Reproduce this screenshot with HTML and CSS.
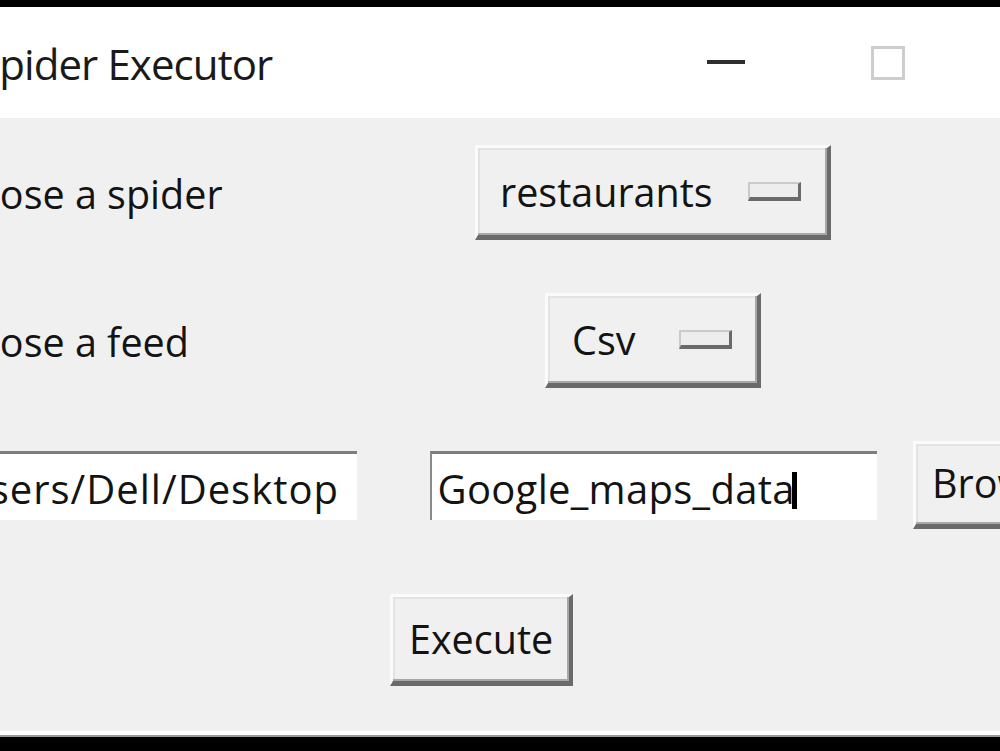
FILE: index.html
```html
<!DOCTYPE html>
<html>
<head>
<meta charset="utf-8">
<link rel="stylesheet" href="styles.css">
</head>
<body>
<div class="screen">
  <div class="window">
    <div class="titlebar">
      <span class="title">Spider Executor</span>
      <span class="ctrl ctrl-min"><span class="min-line"></span></span>
      <span class="ctrl ctrl-max"><span class="max-box"></span></span>
    </div>
    <div class="body">
      <div class="form">
        <span class="label row1">Choose a spider</span>
        <div class="option row1 opt-spider">
          <span class="opt-text">restaurants</span>
          <span class="indicator"></span>
        </div>

        <span class="label row2">Choose a feed</span>
        <div class="option row2 opt-feed">
          <span class="opt-text">Csv</span>
          <span class="indicator"></span>
        </div>

        <div class="entry entry-path row3"><span class="entry-text">C:/Users/Dell/Desktop</span></div>
        <div class="entry entry-name row3"><span class="entry-text">Google_maps_data</span><span class="caret"></span></div>
        <div class="button browse row3">Browse</div>
      </div>
      <div class="exec-row">
        <div class="button execute">Execute</div>
      </div>
    </div>
    <div class="bottom-edge"></div>
  </div>
</div>
</body>
</html>
```

FILE: styles.css
```css
html, body {
  margin: 0;
  padding: 0;
  width: 1000px;
  height: 751px;
  overflow: hidden;
  background: #000;
}

.screen {
  width: 1000px;
  height: 751px;
  overflow: hidden;
  background: #000;
  padding-top: 7px;
  box-sizing: border-box;
}

.window {
  margin-left: -80px;
  width: 1200px;
  height: 730px;
  display: flex;
  flex-direction: column;
  background: #f0f0f0;
  font-family: "Open Sans", "Noto Sans", sans-serif;
  color: #131313;
}

.titlebar {
  height: 111px;
  background: #fff;
  display: flex;
  align-items: center;
  flex-shrink: 0;
}

.title {
  font-size: 42px;
  letter-spacing: -0.9px;
  margin-left: 57px;
  width: 730px;
  padding-top: 2px;
  color: #1a1a1a;
}

.ctrl {
  display: flex;
  align-items: center;
}

.ctrl-min {
  width: 164px;
}

.min-line {
  display: block;
  width: 38px;
  height: 4px;
  background: #2e2e2e;
  margin-bottom: 1px;
}

.max-box {
  display: block;
  width: 28px;
  height: 28px;
  border: 3px solid #cdcdcd;
  margin-top: 1px;
  margin-bottom: 0;
}

.body {
  flex: 1;
  display: flex;
  flex-direction: column;
}

.form {
  display: grid;
  grid-template-columns: 473px 520px 200px;
  grid-template-rows: 95px 95px 88px;
  row-gap: 53px;
  padding-top: 27px;
  align-items: center;
}

.row1 { grid-row: 1; }
.row2 { grid-row: 2; }
.row3 { grid-row: 3; }

.label {
  grid-column: 1;
  font-size: 39.5px;
  padding-left: 7px;
  padding-top: 2px;
}

.option {
  grid-column: 2;
  justify-self: center;
  height: 95px;
  box-sizing: border-box;
  display: flex;
  align-items: center;
  background: #f0f0f0;
  border-top: 3px solid #fbfbfb;
  border-left: 3px solid #fbfbfb;
  border-right: 4px solid #6a6a6a;
  border-bottom: 5px solid #6a6a6a;
  box-shadow: inset -2px -2px 0 #a8a8a8, inset 2px 2px 0 #e3e3e3;
  font-size: 39.5px;
}

.opt-spider {
  width: 356px;
  padding-left: 22px;
}

.opt-feed {
  width: 216px;
  padding-left: 24px;
}

.opt-spider .indicator { margin-left: 35px; }
.opt-feed .indicator { margin-left: 44px; }

.indicator {
  display: block;
  width: 53px;
  height: 19px;
  box-sizing: border-box;
  background: #ededed;
  border-top: 2px solid #cacaca;
  border-left: 2px solid #cacaca;
  border-right: 3px solid #6a6a6a;
  border-bottom: 4px solid #6a6a6a;
}

.entry {
  grid-column: 1;
  height: 69px;
  box-sizing: border-box;
  background: #fff;
  border-top: 3px solid #7e7e7e;
  border-left: 2px solid #8a8a8a;
  display: flex;
  align-items: center;
  font-size: 40px;
  overflow: hidden;
  white-space: nowrap;
}

.entry-path {
  justify-self: end;
  width: 380px;
  margin-right: 36px;
  justify-content: flex-end;
  padding-right: 18px;
  letter-spacing: 1px;
}

.entry-name {
  grid-column: 2;
  justify-self: center;
  width: 447px;
  padding-left: 6px;
  letter-spacing: 0.3px;
}

.entry-text {
  padding-top: 4px;
}

.caret {
  display: block;
  width: 5px;
  height: 37px;
  background: #000;
  margin-left: -3px;
  margin-top: 8px;
}

.button {
  height: 88px;
  box-sizing: border-box;
  display: flex;
  align-items: center;
  background: #f0f0f0;
  border-top: 3px solid #fbfbfb;
  border-left: 3px solid #fbfbfb;
  border-right: 4px solid #6a6a6a;
  border-bottom: 5px solid #6a6a6a;
  box-shadow: inset -2px -2px 0 #a8a8a8, inset 2px 2px 0 #e3e3e3;
  font-size: 39.5px;
}

.browse {
  grid-column: 3;
  justify-self: start;
  width: 180px;
  padding-left: 16px;
  padding-bottom: 2px;
}

.exec-row {
  display: flex;
  padding-left: 470px;
  margin-top: 65px;
}

.execute {
  width: 183px;
  height: 92px;
  padding-left: 16px;
}

.bottom-edge {
  height: 4px;
  background: #fff;
  border-bottom: 2px solid #9a9a9a;
  flex-shrink: 0;
}
```
